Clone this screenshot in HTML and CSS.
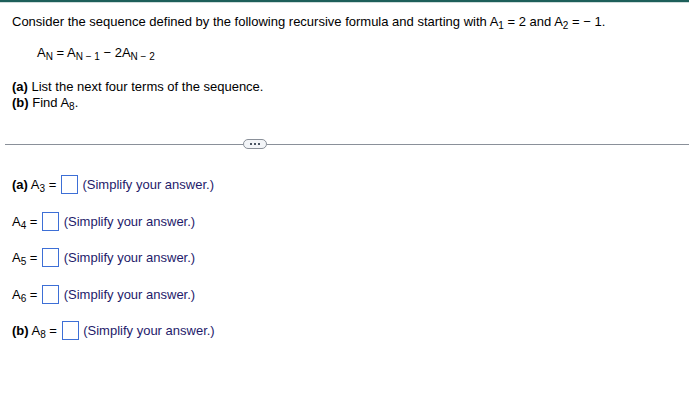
FILE: index.html
```html
<!DOCTYPE html>
<html>
<head>
<meta charset="utf-8">
<link rel="stylesheet" href="styles.css">
</head>
<body>
<div class="topbar"></div>
<div class="content">
  <p class="intro">Consider the sequence defined by the following recursive formula and starting with A<sub>1</sub> = 2 and A<sub>2</sub> = &minus; 1.</p>
  <p class="formula">A<sub>N</sub> = A<sub>N &minus; 1</sub> &minus; 2A<sub>N &minus; 2</sub></p>
  <p class="parts"><b>(a)</b> List the next four terms of the sequence.<br><b>(b)</b> Find A<sub>8</sub>.</p>
</div>
<div class="divider">
  <div class="line short"></div>
  <div class="pill"><span></span><span></span><span></span></div>
  <div class="line"></div>
</div>
<div class="answers">
  <div class="row"><b>(a)</b> A<sub>3</sub> = <span class="box"></span> <span class="hint">(Simplify your answer.)</span></div>
  <div class="row">A<sub>4</sub> = <span class="box"></span> <span class="hint">(Simplify your answer.)</span></div>
  <div class="row">A<sub>5</sub> = <span class="box"></span> <span class="hint">(Simplify your answer.)</span></div>
  <div class="row">A<sub>6</sub> = <span class="box"></span> <span class="hint">(Simplify your answer.)</span></div>
  <div class="row"><b>(b)</b> A<sub>8</sub> = <span class="box"></span> <span class="hint">(Simplify your answer.)</span></div>
</div>
</body>
</html>
```
FILE: styles.css
```css
html, body {
  margin: 0;
  padding: 0;
  background: #fff;
}
body {
  font-family: "Liberation Sans", Arial, sans-serif;
  font-size: 13px;
  color: #000;
}
.topbar {
  height: 2px;
  background: #1d5f5a;
  border-bottom: 1px solid #cfdcdb;
}
.content {
  padding: 0 12px;
}
p {
  margin: 0;
}
sub {
  font-size: 10px;
  vertical-align: -3px;
  line-height: 0;
}
.intro {
  margin-top: 11px;
  line-height: 16px;
}
.formula {
  margin-top: 15px;
  padding-left: 25px;
  line-height: 16px;
}
.parts {
  margin-top: 18px;
  line-height: 16px;
}
.divider {
  display: flex;
  align-items: center;
  margin-top: 28px;
  height: 10px;
}
.line {
  flex: 1;
  height: 1px;
  background: #8a9099;
}
.line.short {
  flex: 0 0 238px;
  margin-left: 5px;
}
.pill {
  width: 22px;
  height: 8px;
  border: 1px solid #8a9099;
  border-radius: 5px;
  background: #f3f5f8;
  display: flex;
  justify-content: center;
  align-items: center;
  gap: 2px;
}
.pill span {
  width: 2px;
  height: 2px;
  background: #4b5563;
}
.answers {
  padding: 26px 12px 0;
  display: grid;
  row-gap: 16.5px;
}
.row {
  height: 20px;
  line-height: 20px;
  white-space: nowrap;
}
.box {
  display: inline-block;
  width: 15px;
  height: 17px;
  border: 1px solid #3d6fd6;
  vertical-align: -5px;
  margin: 0 1px 0 1px;
}
.hint {
  color: #1e1a6a;
}
```
